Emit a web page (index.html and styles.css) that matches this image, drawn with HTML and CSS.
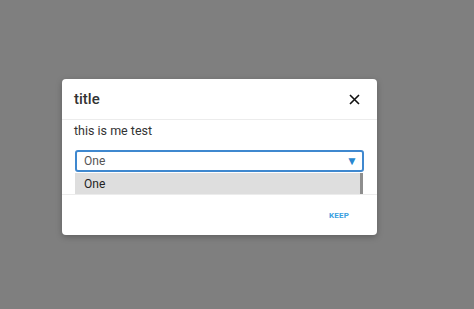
FILE: index.html
```html
<!DOCTYPE html>
<html>
<head>
<meta charset="utf-8">
<link rel="stylesheet" href="styles.css">
</head>
<body>
<div class="dialog">
  <div class="header">
    <span class="title">title</span>
    <span class="close">
      <svg width="11" height="11" viewBox="0 0 11 11"><path d="M1 1L10 10M10 1L1 10" stroke="#111" stroke-width="1.6" fill="none"/></svg>
    </span>
  </div>
  <div class="body">
    <p class="text">this is me test</p>
    <div class="select">
      <span class="value">One</span>
      <span class="arrow">&#9660;</span>
    </div>
    <div class="list">
      <div class="option">One</div>
      <div class="scroll"></div>
    </div>
  </div>
  <div class="footer">
    <span class="keep">KEEP</span>
  </div>
</div>
</body>
</html>
```
FILE: styles.css
```css
html, body {
  margin: 0;
  padding: 0;
}
body {
  background: #7f7f7f;
  width: 474px;
  height: 309px;
  overflow: hidden;
  font-family: Roboto, "Liberation Sans", sans-serif;
}
.dialog {
  margin: 79px 0 0 62px;
  width: 315px;
  height: 156px;
  background: #fff;
  border-radius: 4px;
  box-shadow: 0 2px 6px rgba(0,0,0,0.25);
  display: flex;
  flex-direction: column;
  overflow: hidden;
}
.header {
  height: 40px;
  flex: none;
  display: flex;
  align-items: center;
  justify-content: space-between;
  padding: 0 17px 0 12px;
  border-bottom: 1px solid #ececec;
}
.title {
  font-size: 15px;
  font-weight: 500;
  color: #333;
}
.close {
  display: flex;
  align-items: center;
}
.body {
  height: 74px;
  flex: none;
  padding: 0 13px 0 12px;
  overflow: hidden;
  border-bottom: 1px solid #ececec;
}
.text {
  margin: 1px 0 0 0;
  font-size: 12.5px;
  line-height: 20px;
  color: #333;
}
.select {
  margin: 9px 0 0 1px;
  height: 22px;
  box-sizing: border-box;
  border: 2px solid #3f88cf;
  border-radius: 3px;
  display: flex;
  align-items: center;
  justify-content: space-between;
  padding: 0 4px 0 7px;
}
.value {
  font-size: 12px;
  color: #555;
}
.arrow {
  font-size: 12px;
  color: #2a87d0;
}
.list {
  margin: 1px 1px 0 1px;
  height: 30px;
  background: #dedede;
  display: flex;
  justify-content: space-between;
}
.option {
  font-size: 12px;
  color: #222;
  line-height: 22px;
  padding-left: 9px;
}
.scroll {
  width: 3px;
  height: 100%;
  background: #8e8e8e;
}
.footer {
  flex: 1;
  display: flex;
  align-items: center;
  justify-content: flex-end;
  padding-right: 28px;
}
.keep {
  font-size: 8px;
  font-weight: 700;
  color: #3aa0df;
  letter-spacing: 0.2px;
}
```
